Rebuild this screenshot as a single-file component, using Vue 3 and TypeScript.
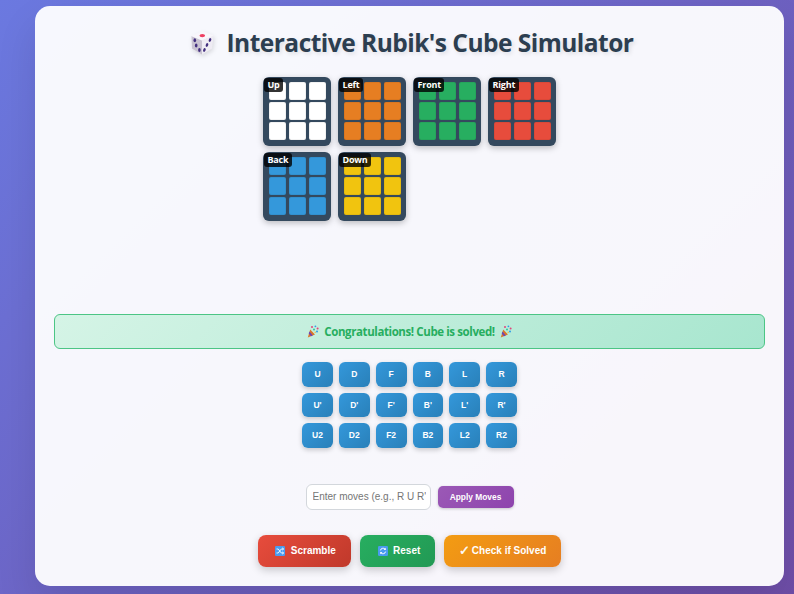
<script setup lang="ts">
interface Face { name: string; color: string }
const faces: Face[] = [
  { name: 'Up', color: '#ffffff' },
  { name: 'Left', color: '#e67e22' },
  { name: 'Front', color: '#27ae60' },
  { name: 'Right', color: '#e74c3c' },
  { name: 'Back', color: '#3498db' },
  { name: 'Down', color: '#f1c40f' },
]
const moves: string[] = ['U','D','F','B','L','R',"U'","D'","F'","B'","L'","R'",'U2','D2','F2','B2','L2','R2']
</script>

<template>
  <div class="page">
    <main class="card">
      <h1 class="title">
        <svg class="dice" viewBox="0 0 25 25" aria-hidden="true">
          <path d="M1.5 6 12 10.5 12 24.5 2 18.5Z" fill="#c9c3d2" />
          <path d="M12 10.5 23.5 5.5 22 18.5 12 24.5Z" fill="#efecf4" />
          <path d="M12.5 1 23.5 5.5 12 10.5 1.5 6Z" fill="#f8f6fb" />
          <ellipse cx="12.3" cy="5.6" rx="2.8" ry="1.6" fill="#ee3f62" />
          <g fill="#43307f">
            <ellipse cx="4.8" cy="10.2" rx="1.3" ry="2" />
            <ellipse cx="6.2" cy="15.4" rx="1.3" ry="2" />
            <ellipse cx="9.4" cy="20" rx="1.3" ry="2" />
            <ellipse cx="20" cy="10" rx="1.2" ry="2" transform="rotate(22 20 10)" />
            <ellipse cx="17" cy="15" rx="1.2" ry="2" transform="rotate(22 17 15)" />
            <ellipse cx="14.4" cy="20" rx="1.2" ry="2" transform="rotate(22 14.4 20)" />
          </g>
        </svg>
        <span>Interactive Rubik's Cube Simulator</span>
      </h1>
      <section class="cube">
        <div v-for="f in faces" :key="f.name" class="face">
          <span class="label">{{ f.name }}</span>
          <div v-for="n in 9" :key="n" class="sticker" :style="{ background: f.color }"></div>
        </div>
      </section>
      <div class="alert">
        <svg class="popper" viewBox="0 0 12 13" aria-hidden="true">
          <path d="M3.2 4.5 8 9.5 0.8 12.6Z" fill="#d9752b" />
          <path d="M2.4 6.5 5.8 10.4 4 11.2 1.7 8.6Z" fill="#6a46b8" />
          <circle cx="5" cy="2" r="1" fill="#e0457b" />
          <circle cx="8.4" cy="1.3" r="0.9" fill="#2f9be8" />
          <circle cx="10.6" cy="3.6" r="1" fill="#e0457b" />
          <circle cx="7" cy="4.4" r="1" fill="#2fc4a0" />
          <circle cx="10" cy="6.6" r="1" fill="#2f9be8" />
          <circle cx="8.2" cy="7.2" r="0.7" fill="#f2b632" />
        </svg>
        <span>Congratulations! Cube is solved!</span>
        <svg class="popper" viewBox="0 0 12 13" aria-hidden="true">
          <path d="M3.2 4.5 8 9.5 0.8 12.6Z" fill="#d9752b" />
          <path d="M2.4 6.5 5.8 10.4 4 11.2 1.7 8.6Z" fill="#6a46b8" />
          <circle cx="5" cy="2" r="1" fill="#e0457b" />
          <circle cx="8.4" cy="1.3" r="0.9" fill="#2f9be8" />
          <circle cx="10.6" cy="3.6" r="1" fill="#e0457b" />
          <circle cx="7" cy="4.4" r="1" fill="#2fc4a0" />
          <circle cx="10" cy="6.6" r="1" fill="#2f9be8" />
          <circle cx="8.2" cy="7.2" r="0.7" fill="#f2b632" />
        </svg>
      </div>
      <section class="moves">
        <button v-for="m in moves" :key="m" class="move">{{ m }}</button>
      </section>
      <section class="custom">
        <input class="input" type="text" placeholder="Enter moves (e.g., R U R' U')" />
        <button class="apply">Apply Moves</button>
      </section>
      <section class="actions">
        <button class="act scramble">
          <svg class="tile" viewBox="0 0 10 10" aria-hidden="true">
            <rect width="10" height="10" rx="1.2" fill="#4a9bf0" />
            <path d="M1.5 3H3.2L6.3 7H8.5M1.5 7H3.2L6.3 3H8.5M7.3 1.9 8.6 3 7.3 4.1M7.3 5.9 8.6 7 7.3 8.1" fill="none" stroke="#fff" stroke-width="0.9" />
          </svg>
          <span>Scramble</span>
        </button>
        <button class="act reset">
          <svg class="tile" viewBox="0 0 10 10" aria-hidden="true">
            <rect width="10" height="10" rx="1.2" fill="#4a9bf0" />
            <path d="M2.4 4.4A2.7 2.7 0 0 1 7 3.1M7.6 5.6A2.7 2.7 0 0 1 3 6.9" fill="none" stroke="#fff" stroke-width="1" />
            <path d="M7.8 1.7V3.9H5.6ZM2.2 8.3V6.1H4.4Z" fill="#fff" />
          </svg>
          <span>Reset</span>
        </button>
        <button class="act check">
          <span class="tick">✓</span>
          <span>Check if Solved</span>
        </button>
      </section>
    </main>
  </div>
</template>

<style>
html, body { margin: 0; padding: 0; }
body { background: linear-gradient(135deg, #6b79e0 0%, #6f4ea8 100%); min-height: 594px; overflow: hidden; }
</style>

<style scoped>
.page {
  box-sizing: border-box;
  height: 594px;
  padding: 6px 10px 8px 35px;
  font-family: "Open Sans", "Noto Sans", sans-serif;
}
.card {
  box-sizing: border-box;
  height: 580px;
  padding: 19px 19px 0;
  background: rgba(255, 255, 255, 0.95);
  border-radius: 15px;
  box-shadow: 0 20px 40px rgba(0, 0, 0, 0.1);
}
.title {
  display: flex;
  align-items: center;
  justify-content: center;
  gap: 12px;
  margin: 0 0 17px;
  padding-left: 4px;
  height: 35px;
  font-size: 24.5px;
  letter-spacing: -0.52px;
  font-weight: 700;
  color: #2c3e50;
  text-shadow: 2px 2px 4px rgba(0, 0, 0, 0.1);
  white-space: nowrap;
}
.dice { width: 25px; height: 25px; flex: none; filter: drop-shadow(1px 2px 2px rgba(0, 0, 0, 0.12)); }
.cube {
  display: grid;
  grid-template-columns: repeat(4, 68px);
  grid-template-rows: repeat(3, 69px);
  gap: 6px 7px;
  justify-content: center;
  margin-bottom: 18px;
}
.face {
  position: relative;
  box-sizing: border-box;
  display: grid;
  grid-template-columns: repeat(3, 17px);
  grid-template-rows: repeat(3, 17.3px);
  gap: 2.7px 3px;
  padding-top: 5.4px;
  align-content: start;
  justify-content: center;
  background: #34495e;
  border-radius: 6px;
  box-shadow: 0 2px 6px rgba(0, 0, 0, 0.25);
}
.sticker {
  box-sizing: border-box;
  border-radius: 2px;
  border: 1px solid rgba(0, 0, 0, 0.05);
}
.label {
  position: absolute;
  top: 1px;
  left: 1px;
  padding: 1px 3.5px;
  background: rgba(0, 0, 0, 0.8);
  border-radius: 3px;
  color: #fff;
  font-size: 9px;
  line-height: 12px;
  font-weight: 700;
  letter-spacing: -0.2px;
}
.alert {
  box-sizing: border-box;
  display: flex;
  align-items: center;
  justify-content: center;
  gap: 5px;
  height: 35px;
  margin-bottom: 13px;
  border: 1px solid #4cc585;
  border-radius: 6px;
  background: linear-gradient(135deg, #d5f4e6, #a8e6cf);
  color: #27ae60;
  font-size: 11.5px;
  letter-spacing: -0.4px;
  font-weight: 700;
}
.popper { width: 12px; height: 13px; flex: none; }
.moves {
  display: grid;
  grid-template-columns: repeat(6, 30.8px);
  grid-auto-rows: 24.5px;
  gap: 6px;
  justify-content: center;
  margin-bottom: 36px;
}
.move {
  padding: 0;
  border: none;
  border-radius: 6px;
  background: linear-gradient(135deg, #3498db, #2980b9);
  color: #fff;
  font-family: "Liberation Sans", sans-serif;
  font-size: 8.5px;
  font-weight: 700;
  box-shadow: 0 2px 5px rgba(0, 0, 0, 0.2);
}
.custom {
  display: flex;
  align-items: center;
  justify-content: center;
  gap: 7px;
  margin-bottom: 25px;
}
.input {
  box-sizing: border-box;
  width: 125px;
  height: 26px;
  padding: 0 4px 0 6px;
  border: 1.5px solid #d3d7dc;
  border-radius: 6px;
  background: #fff;
  font-family: "Liberation Sans", sans-serif;
  font-size: 10px;
  outline: none;
}
.input::placeholder { color: #757575; }
.apply {
  width: 76px;
  height: 22px;
  padding: 0;
  border: none;
  border-radius: 5px;
  background: linear-gradient(135deg, #9b59b6, #8e44ad);
  color: #fff;
  font-family: "Liberation Sans", sans-serif;
  font-size: 8.4px;
  font-weight: 700;
  box-shadow: 0 1px 3px rgba(0, 0, 0, 0.2);
}
.actions {
  display: flex;
  justify-content: center;
  gap: 9px;
}
.act {
  display: flex;
  align-items: center;
  justify-content: center;
  height: 32px;
  padding: 0;
  border: none;
  border-radius: 8px;
  color: #fff;
  font-family: "Liberation Sans", sans-serif;
  font-size: 10px;
  font-weight: 700;
  box-shadow: 0 3px 8px rgba(0, 0, 0, 0.2);
}
.tile { width: 10px; height: 10px; flex: none; margin-right: 5.5px; }
.tick { font-family: "DejaVu Sans", sans-serif; font-size: 13px; margin-right: 2px; -webkit-text-stroke: 0.4px #fff; }
.scramble { width: 93.3px; padding-left: 1.5px; background: linear-gradient(135deg, #e74c3c, #c0392b); }
.reset { width: 75px; padding-left: 2px; background: linear-gradient(135deg, #27ae60, #229954); }
.check { width: 116.4px; background: linear-gradient(135deg, #f39c12, #e67e22); }
</style>
